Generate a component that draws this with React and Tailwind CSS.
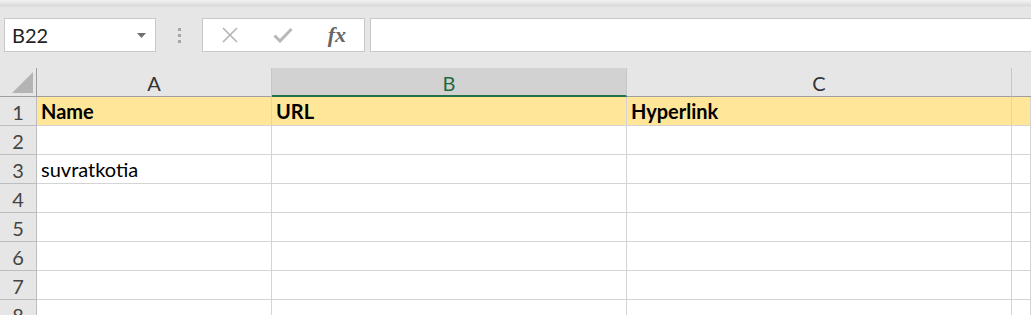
import React from "react";

const font = { fontFamily: '"Lato", "Open Sans", sans-serif' };

function Row({ num, a, b, c, yellow }) {
  const cell = `h-[29px] border-r border-b border-[#d4d4d4] flex items-end pb-[2px] pl-[4px] text-[20px] leading-[24px] text-black ${yellow ? "bg-[#ffe699] font-bold" : "bg-white"}`;
  return (
    <>
      <div className="h-[29px] bg-[#e6e6e6] border-r border-b border-[#bdbdbd] flex items-end justify-center pb-[1px] text-[20px] leading-[24px] text-[#444]">
        {num}
      </div>
      <div className={cell}>{a}</div>
      <div className={cell}>{b}</div>
      <div className={cell}>{c}</div>
      <div className={cell}></div>
    </>
  );
}

export default function App() {
  return (
    <div className="w-[1031px] h-[315px] overflow-hidden bg-[#e6e6e6] flex flex-col" style={font}>
      <div className="shrink-0 h-[7px] bg-gradient-to-b from-[#f4f4f4] to-[#d9d9d9] border-b border-[#e0e0e0]" />
      <div className="shrink-0 flex items-center mt-[11px] h-[34px]">
        <div className="ml-[4px] w-[152px] h-[34px] bg-white border border-[#c8c8c8] flex items-center justify-between pl-[7px] pr-[9px]">
          <span className="text-[20px] text-[#222]">B22</span>
          <svg width="9" height="5" viewBox="0 0 9 5"><path d="M0 0h9L4.5 5z" fill="#707070" /></svg>
        </div>
        <div className="w-[46px] h-[34px] flex flex-col items-center justify-center gap-[3px]">
          <div className="w-[3px] h-[3px] bg-[#a6a6a6]" />
          <div className="w-[3px] h-[3px] bg-[#a6a6a6]" />
          <div className="w-[3px] h-[3px] bg-[#a6a6a6]" />
        </div>
        <div className="w-[163px] h-[34px] bg-white border border-[#c8c8c8] flex items-center">
          <div className="w-[52px] flex justify-center ml-[1px]">
            <svg width="18" height="18" viewBox="0 0 18 18"><path d="M2 2L16 16M16 2L2 16" stroke="#b4b4b4" strokeWidth="1.6" /></svg>
          </div>
          <div className="w-[55px] flex justify-center">
            <svg width="20" height="16" viewBox="0 0 20 16"><path d="M1.5 8.5L7 14L18.5 2" stroke="#b8b8b8" strokeWidth="3" fill="none" /></svg>
          </div>
          <div className="w-[55px] flex justify-center">
            <span className="text-[22px] italic font-bold text-[#666] leading-none" style={{ fontFamily: '"Liberation Serif", serif' }}>fx</span>
          </div>
        </div>
        <div className="ml-[5px] flex-1 h-[34px] bg-white border border-[#c8c8c8] border-r-0" />
      </div>
      <div className="shrink-0 mt-[16px] grid grid-cols-[37px_235px_355px_385px_1fr]">
        <div className="h-[29px] bg-[#e6e6e6] border-r border-b border-[#9e9e9e] relative">
          <svg className="absolute left-[12px] top-[4px]" width="21" height="21" viewBox="0 0 21 21"><path d="M21 0V21H0z" fill="#b4b4b4" /></svg>
        </div>
        <div className="h-[29px] bg-[#e6e6e6] border-r border-b border-[#9e9e9e] border-r-[#c6c6c6] flex items-end justify-center pb-[1px] text-[20px] leading-[24px] text-[#333]">A</div>
        <div className="h-[29px] bg-[#d2d2d2] border-r border-b-2 border-r-[#c6c6c6] border-b-[#217346] flex items-end justify-center text-[20px] leading-[24px] text-[#1e6b40]">B</div>
        <div className="h-[29px] bg-[#e6e6e6] border-r border-b border-[#9e9e9e] border-r-[#c6c6c6] flex items-end justify-center pb-[1px] text-[20px] leading-[24px] text-[#333]">C</div>
        <div className="h-[29px] bg-[#e6e6e6] border-b border-[#9e9e9e]" />
        <Row num="1" a="Name" b="URL" c="Hyperlink" yellow />
        <Row num="2" />
        <Row num="3" a="suvratkotia" />
        <Row num="4" />
        <Row num="5" />
        <Row num="6" />
        <Row num="7" />
        <Row num="8" />
      </div>
    </div>
  );
}
